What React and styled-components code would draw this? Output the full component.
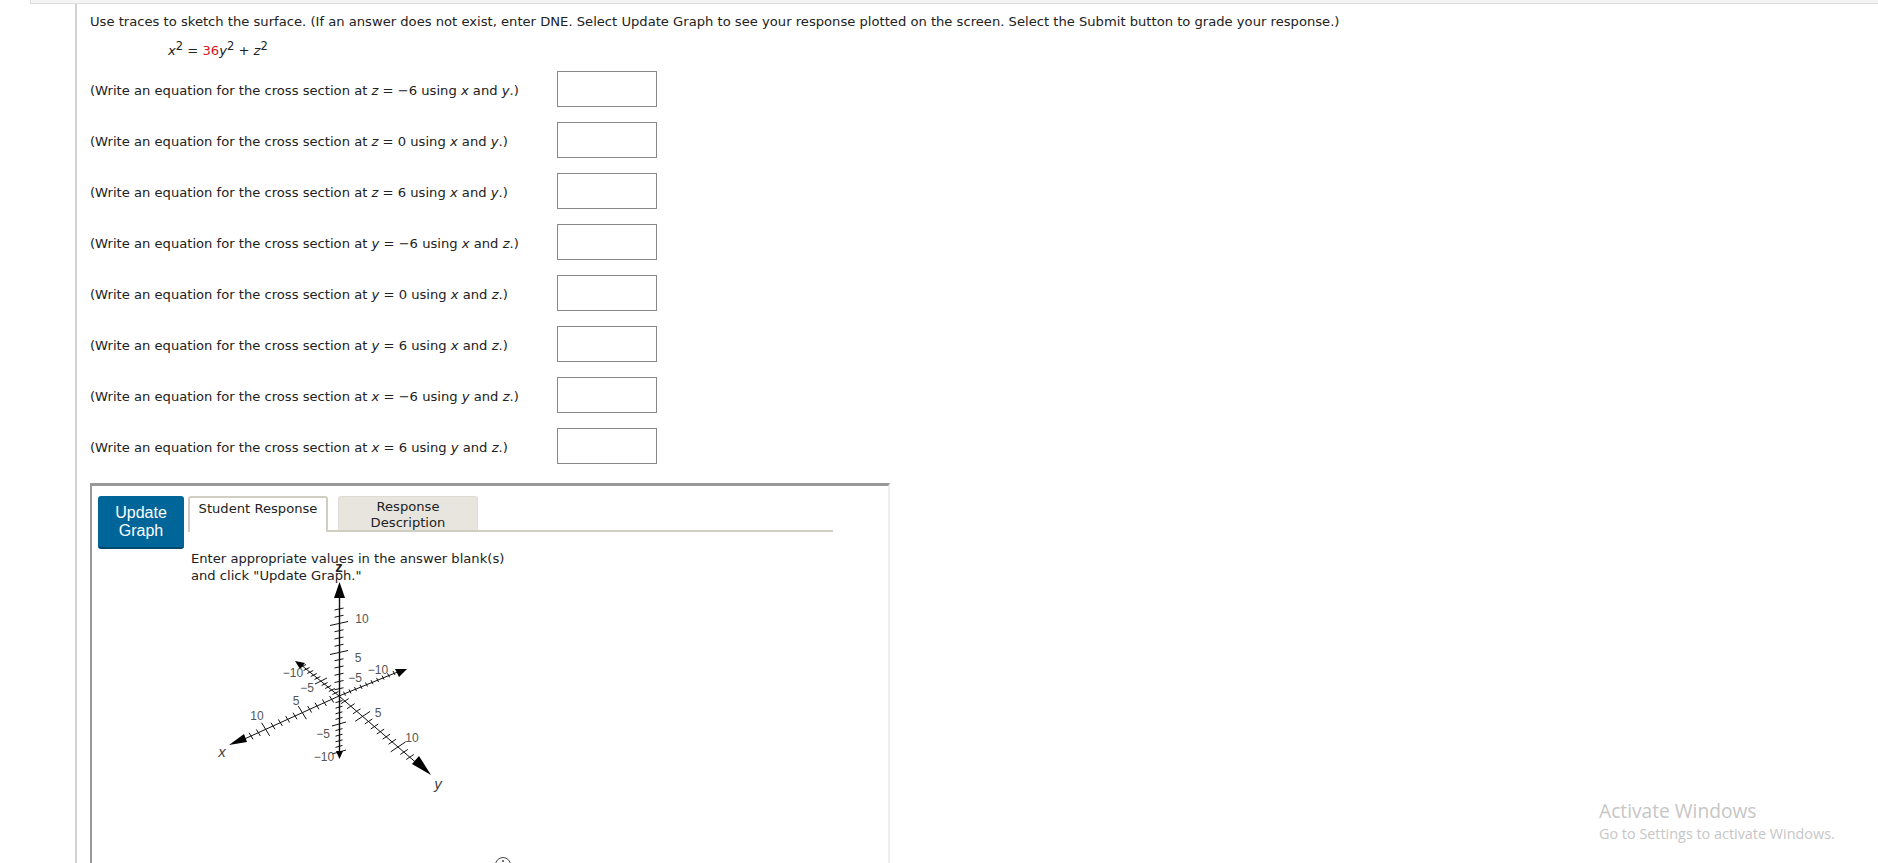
import React from 'react';
import styled, { createGlobalStyle } from 'styled-components';

const GlobalStyle = createGlobalStyle`
  html, body {
    margin: 0;
    height: 100%;
    overflow: hidden;
    background: #fff;
  }
  body {
    font-family: 'DejaVu Sans', Verdana, sans-serif;
    font-size: 13.13px;
    color: #222;
  }
`;

const Page = styled.div`
  height: 863px;
  overflow: hidden;
  position: relative;
`;

const TopStrip = styled.div`
  margin-left: 30px;
  height: 3px;
  background: #f4f4f4;
  border-left: 1px solid #ddd;
  border-bottom: 1px solid #ddd;
`;

const Sheet = styled.div`
  margin-left: 75px;
  height: 859px;
  border-left: 2px solid #d2d2d2;
  padding: 10px 0 0 13px;
`;

const Intro = styled.div`
  line-height: 16px;
  white-space: nowrap;
`;

const Equation = styled.div`
  margin: 10px 0 0 78px;
  height: 22px;
  line-height: 22px;
  i {
    font-style: italic;
  }
  sup {
    font-size: 11.5px;
    line-height: 0;
  }
`;

const Red = styled.span`
  color: #d8141c;
`;

const Rows = styled.div`
  margin-top: 9px;
  display: flex;
  flex-direction: column;
  gap: 15px;
`;

const Row = styled.div`
  display: flex;
  align-items: center;
  height: 36px;
`;

const RowLabel = styled.div`
  width: 467px;
  position: relative;
  top: 1px;
  i {
    font-style: italic;
  }
`;

const Blank = styled.input`
  box-sizing: border-box;
  width: 100px;
  height: 36px;
  border: 1px solid #888;
  background: #fff;
  padding: 0;
`;

const GraphPanel = styled.div`
  margin-top: 19px;
  width: 800px;
  height: 400px;
  box-sizing: border-box;
  border-top: 3px solid #999;
  border-left: 2px solid #999;
  border-right: 2px solid #eee;
  padding: 10px 0 0 6px;
  display: flex;
  position: relative;
`;

const UpdateButton = styled.button`
  box-sizing: border-box;
  width: 86px;
  height: 53px;
  border: 0;
  border-bottom: 2px solid #004a70;
  border-radius: 3px;
  background: #006699;
  color: #fff;
  font-family: 'Liberation Sans', Arial, sans-serif;
  font-size: 16px;
  line-height: 18px;
  padding: 0;
  flex: none;
`;

const TabArea = styled.div`
  margin-left: 4px;
  width: 645px;
`;

const TabBar = styled.div`
  display: flex;
  gap: 10px;
  height: 36px;
  box-sizing: border-box;
  border-bottom: 2px solid #d0cdc3;
`;

const Tab = styled.div`
  box-sizing: border-box;
  width: 140px;
  height: ${props => (props.active ? '36px' : '34px')};
  border-style: solid;
  border-color: ${props => (props.active ? '#d0cdc3' : '#dedbd2')};
  border-width: ${props => (props.active ? '2px 2px 0 2px' : '1px 1px 0 1px')};
  border-radius: 3px 3px 0 0;
  background: ${props => (props.active ? '#fff' : '#e8e5df')};
  color: #222;
  text-align: center;
  line-height: 16px;
  padding-top: ${props => (props.active ? '3px' : '2px')};
`;

const Hint = styled.div`
  margin: 18px 0 0 3px;
  line-height: 17px;
`;

const Surface = styled.svg`
  position: absolute;
  left: 0;
  top: 0;
  pointer-events: none;
`;

const AxisNum = styled.text`
  font-family: 'Liberation Sans', Arial, sans-serif;
  font-size: 12px;
  fill: #555;
  text-anchor: middle;
`;

const AxisName = styled.text`
  font-family: 'Liberation Sans', Arial, sans-serif;
  font-size: 15px;
  font-style: italic;
  fill: #444;
  text-anchor: middle;
`;

const Watermark = styled.div`
  position: absolute;
  left: 1599px;
  top: 798px;
  color: #c6c6c6;
  font-family: 'Open Sans', sans-serif;
  pointer-events: none;
`;

const WatermarkTitle = styled.div`
  font-size: 19.2px;
  line-height: 26px;
`;

const WatermarkText = styled.div`
  font-size: 14.4px;
  line-height: 20px;
`;

const labels = [
  ['z', '\u22126', 'x', 'y'],
  ['z', '0', 'x', 'y'],
  ['z', '6', 'x', 'y'],
  ['y', '\u22126', 'x', 'z'],
  ['y', '0', 'x', 'z'],
  ['y', '6', 'x', 'z'],
  ['x', '\u22126', 'y', 'z'],
  ['x', '6', 'y', 'z'],
];

// tick marks along a straight run of an axis, with every major one longer
const ticks = (from, to, count, dx, dy, majors) => {
  const out = [];
  for (let i = 1; i <= count; i++) {
    const t = i / count;
    const x = from[0] + (to[0] - from[0]) * t;
    const y = from[1] + (to[1] - from[1]) * t;
    const k = majors.includes(i) ? 1 : 0.5;
    out.push(`M${x - dx * k} ${y - dy * k}L${x + dx * k} ${y + dy * k}`);
  }
  return out.join('');
};

const Graph = () => (
  <Surface width="1000" height="863" viewBox="0 0 1000 863">
    <g stroke="#111" strokeWidth="1" fill="none">
      <path strokeWidth="1.4" d="M339.5 595V752" />
      <path d="M339 696L240 741M339 696L400 671M339 696L420 766M339 696L300 664" />
      <path d={ticks([339, 696], [339, 609], 12, 9, -2, [6, 10])} />
      <path d={ticks([339, 696], [339, 752], 10, 7, -2, [5, 10])} />
      <path d={ticks([339, 696], [251, 736], 12, 4, 6.5, [5, 10])} />
      <path d={ticks([339, 696], [394, 673], 10, 2, 4, [])} />
      <path d={ticks([339, 696], [410, 757], 12, 7.5, -5, [4, 10])} />
      <path d={ticks([339, 696], [303, 666], 10, 6, -3, [5])} />
    </g>
    <g fill="#000">
      <path d="M339.5 582L334 598H345Z" />
      <path d="M339.5 759L336 751H343Z" />
      <path d="M229 745L244 734L247 742Z" />
      <path d="M431 775L412 764L419 756Z" />
      <path d="M407 669L395 669L399 677Z" />
      <path d="M295 661L305 663L300 669Z" />
    </g>
    <AxisNum x="362" y="623">10</AxisNum>
    <AxisNum x="358" y="662">5</AxisNum>
    <AxisNum x="323" y="738">−5</AxisNum>
    <AxisNum x="324" y="761">−10</AxisNum>
    <AxisNum x="296" y="705">5</AxisNum>
    <AxisNum x="257" y="720">10</AxisNum>
    <AxisNum x="355" y="682">−5</AxisNum>
    <AxisNum x="378" y="674">−10</AxisNum>
    <AxisNum x="378" y="717">5</AxisNum>
    <AxisNum x="412" y="742">10</AxisNum>
    <AxisNum x="307" y="692">−5</AxisNum>
    <AxisNum x="293" y="677">−10</AxisNum>
    <AxisName x="222" y="757">x</AxisName>
    <AxisName x="438" y="789">y</AxisName>
    <text x="339" y="572" textAnchor="middle" fontFamily="Liberation Sans, sans-serif" fontSize="15" fontWeight="bold" fill="#222">z</text>
    <circle cx="503" cy="865" r="7.5" fill="none" stroke="#444" />
    <circle cx="503" cy="861" r="1" fill="#444" />
  </Surface>
);

export default function App() {
  return (
    <Page>
      <GlobalStyle />
      <TopStrip />
      <Sheet>
        <Intro>
          Use traces to sketch the surface. (If an answer does not exist, enter DNE. Select Update Graph to see your response plotted on the screen. Select the Submit button to grade your response.)
        </Intro>
        <Equation>
          <i>x</i><sup>2</sup> = <Red>36</Red><i>y</i><sup>2</sup> + <i>z</i><sup>2</sup>
        </Equation>
        <Rows>
          {labels.map(([axis, value, a, b], i) => (
            <Row key={i}>
              <RowLabel>
                (Write an equation for the cross section at <i>{axis}</i> = {value} using <i>{a}</i> and <i>{b}</i>.)
              </RowLabel>
              <Blank type="text" />
            </Row>
          ))}
        </Rows>
        <GraphPanel>
          <UpdateButton>Update<br />Graph</UpdateButton>
          <TabArea>
            <TabBar>
              <Tab active>Student Response</Tab>
              <Tab>Response<br />Description</Tab>
            </TabBar>
            <Hint>
              Enter appropriate values in the answer blank(s)<br />and click "Update Graph."
            </Hint>
          </TabArea>
        </GraphPanel>
      </Sheet>
      <Graph />
      <Watermark>
        <WatermarkTitle>Activate Windows</WatermarkTitle>
        <WatermarkText>Go to Settings to activate Windows.</WatermarkText>
      </Watermark>
    </Page>
  );
}
